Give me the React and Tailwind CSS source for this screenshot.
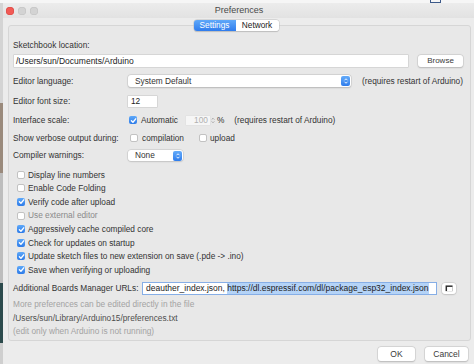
import React from 'react';

/* ─── small controls ────────────────────────────────────────────────────── */
function Check({ on, className = '' }) {
  if (!on) {
    return <span className={`h-[8px] w-[8px] shrink-0 rounded-[2px] border border-[#c2c2c2] bg-white ${className}`} />;
  }
  return (
    <span className={`flex h-[8px] w-[8px] shrink-0 items-center justify-center rounded-[2px] bg-gradient-to-b from-[#5ea8f9] to-[#2d7be8] ${className}`}>
      <svg viewBox="0 0 10 10" className="h-[7px] w-[7px]">
        <path d="M2 5.3 L4.2 7.5 L8.2 2.6" fill="none" stroke="white" strokeWidth="1.9" strokeLinecap="round" strokeLinejoin="round" />
      </svg>
    </span>
  );
}

function Stepper({ className = '' }) {
  return (
    <span className={`flex h-[10px] w-[9px] shrink-0 items-center justify-center rounded-[2px] bg-gradient-to-b from-[#64abf9] to-[#2e7cec] ${className}`}>
      <svg viewBox="0 0 8 10" className="h-[8px] w-[6px]">
        <path d="M2 4 L4 2 L6 4 M2 6 L4 8 L6 6" fill="none" stroke="white" strokeWidth="1.2" />
      </svg>
    </span>
  );
}

function Select({ value, className = '' }) {
  return (
    <div className={`flex shrink-0 items-center justify-between rounded-[3px] bg-white pl-[7px] pr-[1px] shadow-[0_0_0_0.5px_#c8c8c8,0_0.5px_1.5px_rgba(0,0,0,0.25)] ${className}`}>
      <span>{value}</span>
      <Stepper />
    </div>
  );
}

function Button({ children, className = '' }) {
  return (
    <div className={`flex shrink-0 items-center justify-center rounded-[3px] bg-white text-[#3a3a3a] shadow-[0_0_0_0.5px_#c8c8c8,0_0.5px_1.5px_rgba(0,0,0,0.25)] ${className}`}>
      {children}
    </div>
  );
}

const OPTIONS = [
  { label: 'Display line numbers', on: false },
  { label: 'Enable Code Folding', on: false },
  { label: 'Verify code after upload', on: true },
  { label: 'Use external editor', on: false },
  { label: 'Aggressively cache compiled core', on: true },
  { label: 'Check for updates on startup', on: true },
  { label: 'Update sketch files to new extension on save (.pde -> .ino)', on: true },
  { label: 'Save when verifying or uploading', on: true },
];

/* ─── page ──────────────────────────────────────────────────────────────── */
export default function App() {
  return (
    <div className="flex h-[364px] w-[474px] flex-col overflow-hidden whitespace-nowrap bg-[#f5f5f5] font-['Liberation_Sans',Arial,sans-serif] text-[8.3px] text-[#333]">
      {/* desktop strip behind the window */}
      <div className="relative h-[3px] shrink-0 bg-[#f6f6f6]">
        <span className="absolute left-[430px] top-0 h-[3px] w-[11px] border-x border-b border-[#3d5a8a]" />
      </div>

      <div className="flex flex-1">
        <div className="flex w-[3px] shrink-0 flex-col">
          <div className="h-[100px] bg-[#d4d4d4]" />
          <div className="h-[70px] bg-[#9a8a7c]" />
          <div className="h-[110px] bg-[#bdbdbd]" />
          <div className="h-[60px] bg-[#2c4a4c]" />
          <div className="flex-1 bg-[#cfcfcf]" />
        </div>

        {/* window */}
        <div className="flex flex-1 flex-col bg-[#ececec]">
          {/* title bar */}
          <div className="relative flex h-[15px] shrink-0 items-center bg-gradient-to-b from-[#ececec] to-[#e2e2e2] pl-[3px]">
            <div className="flex gap-[4px]">
              <span className="h-[8px] w-[8px] rounded-full bg-[#f25a55] shadow-[inset_0_0_0_0.5px_#d64540]" />
              <span className="h-[8px] w-[8px] rounded-full bg-[#d3d3d3] shadow-[inset_0_0_0_0.5px_#c0c0c0]" />
              <span className="h-[8px] w-[8px] rounded-full bg-[#d3d3d3] shadow-[inset_0_0_0_0.5px_#c0c0c0]" />
            </div>
            <span className="absolute inset-x-0 text-center text-[9px] text-[#4a4a4a]">Preferences</span>
          </div>

          {/* tabs */}
          <div className="relative z-10 mt-[2px] flex h-[11px] shrink-0 justify-center pr-[6px]">
            <div className="flex rounded-[3px] shadow-[0_0_0_0.5px_#c4c4c4,0_0.5px_1px_rgba(0,0,0,0.2)]">
              <span className="flex w-[42px] items-center justify-center rounded-l-[3px] bg-gradient-to-b from-[#5fa8f9] to-[#2f7ced] text-white">Settings</span>
              <span className="flex w-[43px] items-center justify-center rounded-r-[3px] bg-white text-[#222]">Network</span>
            </div>
          </div>

          {/* settings box */}
          <div className="ml-[5px] mr-[4px] -mt-[6px] flex h-[316px] shrink-0 flex-col rounded-[3px] border border-[#d6d6d6] bg-[#e8e8e8] pl-[4px] pr-[7px] pt-[13px]">
            <div className="flex h-[12px] items-center">Sketchbook location:</div>

            <div className="flex h-[20px] items-center gap-[10px]">
              <div className="ml-[1px] flex h-[12px] flex-1 items-center bg-white pl-[2px] text-[8.5px] text-[#222] shadow-[0_0_0_0.5px_#c4c4c4]">
                /Users/sun/Documents/Arduino
              </div>
              <Button className="h-[12px] w-[45px] text-[8px]">Browse</Button>
            </div>

            <div className="flex h-[20px] items-center">
              <span className="w-[115px] shrink-0">Editor language:</span>
              <Select value="System Default" className="h-[12px] w-[223px]" />
              <span className="ml-[11px] shrink-0">(requires restart of Arduino)</span>
            </div>

            <div className="flex h-[20px] items-center">
              <span className="w-[115px] shrink-0">Editor font size:</span>
              <div className="flex h-[11px] w-[29px] items-center bg-white pl-[3px] text-[#222] shadow-[0_0_0_0.5px_#c4c4c4]">12</div>
            </div>

            <div className="flex h-[18px] items-center">
              <span className="w-[115px] shrink-0">Interface scale:</span>
              <Check on className="ml-[1px]" />
              <span className="ml-[4px]">Automatic</span>
              <div className="ml-[8px] flex h-[9px] w-[24px] items-center justify-end bg-[#f6f6f6] pr-[2px] text-[#b0b0b0] shadow-[0_0_0_0.5px_#dedede]">100</div>
              <svg viewBox="0 0 6 10" className="h-[9px] w-[6px]">
                <path d="M1.5 4 L3 2.5 L4.5 4 M1.5 6 L3 7.5 L4.5 6" fill="none" stroke="#9a9a9a" strokeWidth="0.9" />
              </svg>
              <span className="ml-[1px]">%</span>
              <span className="ml-[10px]">(requires restart of Arduino)</span>
            </div>

            <div className="flex h-[18px] items-center">
              <span className="w-[115px] shrink-0">Show verbose output during:</span>
              <Check className="ml-[2px]" />
              <span className="ml-[4px]">compilation</span>
              <Check className="ml-[15px]" />
              <span className="ml-[3px]">upload</span>
            </div>

            <div className="flex h-[17px] items-center">
              <span className="w-[115px] shrink-0">Compiler warnings:</span>
              <Select value="None" className="h-[11px] w-[55px]" />
            </div>

            <div className="mt-[4px] flex flex-col pl-[4px]">
              {OPTIONS.map((o) => (
                <div key={o.label} className={`flex h-[13.6px] items-center gap-[3px] ${o.label === 'Use external editor' ? 'text-[#8a8a8a]' : ''}`}>
                  <Check on={o.on} />
                  <span>{o.label}</span>
                </div>
              ))}
            </div>

            <div className="mt-[3px] flex h-[17px] items-center">
              <span className="w-[130px] shrink-0">Additional Boards Manager URLs:</span>
              <div className="flex h-[11px] w-[293px] shrink-0 items-center overflow-hidden bg-white pl-[3px] text-[8.5px] text-[#222] shadow-[0_0_0_1px_#86aee6]">
                <span>deauther_index.json,&nbsp;</span>
                <span className="bg-[#b4d3f7]">https://dl.espressif.com/dl/package_esp32_index.json</span>
              </div>
              <Button className="ml-[6px] h-[11px] w-[14px]">
                <svg viewBox="0 0 10 8" className="h-[7px] w-[9px]">
                  <rect x="0.5" y="0.5" width="8" height="6.5" fill="#2d2d2d" />
                  <rect x="2.2" y="2.2" width="6.3" height="4.8" fill="#fff" />
                </svg>
              </Button>
            </div>

            <div className="mt-[1px] flex flex-col">
              <span className="flex h-[13.5px] items-center text-[#a3a3a3]">More preferences can be edited directly in the file</span>
              <span className="flex h-[13.5px] items-center text-[#4d4d4d]">/Users/sun/Library/Arduino15/preferences.txt</span>
              <span className="flex h-[13.5px] items-center text-[#a3a3a3]">(edit only when Arduino is not running)</span>
            </div>
          </div>

          {/* dialog buttons */}
          <div className="mt-[6px] flex h-[14px] shrink-0 justify-end gap-[10px] pr-[7px]">
            <Button className="w-[37px] text-[8.5px]">OK</Button>
            <Button className="w-[43px] text-[8.5px]">Cancel</Button>
          </div>
        </div>
      </div>
    </div>
  );
}
